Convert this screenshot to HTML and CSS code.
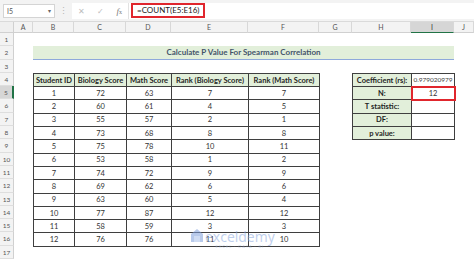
FILE: index.html
```html
<!DOCTYPE html>
<html lang="en">
<head>
    <meta charset="UTF-8">
    <title>Calculate P Value For Spearman Correlation</title>
    <link rel="stylesheet" href="styles.css">
</head>
<body>
    <div class="formula-bar">
        <div class="name-box">
            <span>I5</span>
            <span class="arrow">&#9662;</span>
        </div>
        <div class="dots">&#8942;</div>
        <div class="fx-tools">
            <span>&#10005;</span>
            <span>&#10003;</span>
            <span class="fx"><i>f</i><small>x</small></span>
        </div>
        <div class="formula-input">
            <span class="formula">=COUNT(E5:E16)</span>
        </div>
    </div>

    <div class="sheet">
        <div class="corner"></div>
        <div class="col-head">A</div>
        <div class="col-head">B</div>
        <div class="col-head">C</div>
        <div class="col-head">D</div>
        <div class="col-head">E</div>
        <div class="col-head">F</div>
        <div class="col-head">G</div>
        <div class="col-head">H</div>
        <div class="col-head active">I</div>
        <div class="col-head">J</div>

        <div class="row-head" style="grid-row: 2">1</div>
        <div class="row-head" style="grid-row: 3">2</div>
        <div class="row-head" style="grid-row: 4">3</div>
        <div class="row-head" style="grid-row: 5">4</div>
        <div class="row-head active" style="grid-row: 6">5</div>
        <div class="row-head" style="grid-row: 7">6</div>
        <div class="row-head" style="grid-row: 8">7</div>
        <div class="row-head" style="grid-row: 9">8</div>
        <div class="row-head" style="grid-row: 10">9</div>
        <div class="row-head" style="grid-row: 11">10</div>
        <div class="row-head" style="grid-row: 12">11</div>
        <div class="row-head" style="grid-row: 13">12</div>
        <div class="row-head" style="grid-row: 14">13</div>
        <div class="row-head" style="grid-row: 15">14</div>
        <div class="row-head" style="grid-row: 16">15</div>
        <div class="row-head" style="grid-row: 17">16</div>
        <div class="row-head" style="grid-row: 18">17</div>

        <div class="title">Calculate P Value For Spearman Correlation</div>

        <div class="data-area">
            <table class="data-table">
                <colgroup>
                    <col style="width: 41px">
                    <col style="width: 52px">
                    <col style="width: 45px">
                    <col style="width: 77px">
                    <col style="width: 71px">
                </colgroup>
                <tr>
                    <th>Student ID</th>
                    <th>Biology Score</th>
                    <th>Math Score</th>
                    <th>Rank (Biology Score)</th>
                    <th>Rank (Math Score)</th>
                </tr>
                <tr><td>1</td><td>72</td><td>63</td><td>7</td><td>7</td></tr>
                <tr><td>2</td><td>60</td><td>61</td><td>4</td><td>5</td></tr>
                <tr><td>3</td><td>55</td><td>57</td><td>2</td><td>1</td></tr>
                <tr><td>4</td><td>73</td><td>68</td><td>8</td><td>8</td></tr>
                <tr><td>5</td><td>75</td><td>78</td><td>10</td><td>11</td></tr>
                <tr><td>6</td><td>53</td><td>58</td><td>1</td><td>2</td></tr>
                <tr><td>7</td><td>74</td><td>72</td><td>9</td><td>9</td></tr>
                <tr><td>8</td><td>69</td><td>62</td><td>6</td><td>6</td></tr>
                <tr><td>9</td><td>63</td><td>60</td><td>5</td><td>4</td></tr>
                <tr><td>10</td><td>77</td><td>87</td><td>12</td><td>12</td></tr>
                <tr><td>11</td><td>58</td><td>59</td><td>3</td><td>3</td></tr>
                <tr><td>12</td><td>76</td><td>76</td><td>11</td><td>10</td></tr>
            </table>
        </div>

        <div class="stats-area">
            <table class="stats-table">
                <colgroup>
                    <col style="width: 59px">
                    <col style="width: 43px">
                </colgroup>
                <tr><th>Coefficient (rs):</th><td class="small">0.979020979</td></tr>
                <tr><th>N:</th><td class="selected">12</td></tr>
                <tr><th>T statistic:</th><td></td></tr>
                <tr><th>DF:</th><td></td></tr>
                <tr><th>p value:</th><td></td></tr>
            </table>
        </div>
    </div>

    <!-- watermark -->
    <div class="watermark">
        <svg width="12" height="13" viewBox="0 0 12 13">
            <path d="M6 0 L12 5 L12 13 L0 13 L0 5 Z" fill="#7f9fdc"/>
            <path d="M3 7 L9 7 L9 13 L3 13 Z" fill="#a9c0ea"/>
        </svg>
        <div class="wm-text">
            <span class="wm-name">exceldemy</span>
            <span class="wm-sub">EXCEL · DATA · BI</span>
        </div>
    </div>
</body>
</html>
```

FILE: styles.css
```css
* {
    margin: 0;
    padding: 0;
    box-sizing: border-box;
}

body {
    width: 474px;
    height: 261px;
    overflow: hidden;
    background: #fff;
    font-family: Lato, "Liberation Sans", Arial, sans-serif;
    color: #262626;
    position: relative;
}

/* Formula bar */
.formula-bar {
    display: flex;
    align-items: center;
    height: 22px;
    padding: 3px 0 3px 3px;
    background: #f3f3f3;
    border-bottom: 1px solid #dadada;
}

.name-box {
    display: flex;
    justify-content: space-between;
    align-items: center;
    width: 52px;
    height: 14px;
    padding: 0 3px;
    background: #fff;
    border: 1px solid #d4d4d4;
    font-size: 7px;
    color: #555;
}

.name-box .arrow {
    font-size: 6px;
    color: #666;
}

.dots {
    width: 17px;
    text-align: center;
    font-size: 9px;
    color: #b5b5b5;
}

.fx-tools {
    display: flex;
    align-items: center;
    justify-content: space-around;
    width: 56px;
    height: 16px;
    background: #fff;
    font-size: 8px;
    color: #bdbdbd;
}

.fx-tools .fx {
    font-family: "Liberation Serif", serif;
    color: #7a7a7a;
    font-size: 9px;
}

.fx-tools .fx small {
    font-size: 6px;
}

.formula-input {
    flex: 1;
    height: 16px;
    display: flex;
    align-items: center;
    padding-left: 2px;
    background: #fff;
    border-left: 1px solid #e2e2e2;
}

.formula {
    border: 2px solid #e0262d;
    padding: 0 4px;
    height: 15px;
    line-height: 11px;
    font-size: 8px;
    color: #222;
}

/* Sheet grid */
.sheet {
    display: grid;
    grid-template-columns: 14px 19px 41px 52px 45px 77px 71px 33px 59px 43px 1fr;
    grid-template-rows: 11px repeat(17, 13.3px);
}

.corner {
    grid-row: 1;
    grid-column: 1;
    background: #efefef;
    border-right: 1px solid #d0d0d0;
    border-bottom: 1px solid #d0d0d0;
}

.col-head {
    grid-row: 1;
    background: #f3f3f3;
    border-right: 1px solid #d8d8d8;
    border-bottom: 1px solid #d0d0d0;
    text-align: center;
    font-size: 7px;
    line-height: 10px;
    color: #555;
}

.col-head.active {
    background: #d6d6d6;
    border-bottom: 1px solid #217346;
    color: #333;
}

.row-head {
    grid-column: 1;
    background: #f3f3f3;
    border-right: 1px solid #d0d0d0;
    border-bottom: 1px solid #dedede;
    text-align: center;
    font-size: 6.5px;
    line-height: 13px;
    color: #555;
}

.row-head.active {
    background: #d6d6d6;
    border-right: 2px solid #217346;
}

.title {
    grid-column: 3 / 11;
    grid-row: 3;
    background: #e2efda;
    border-bottom: 1px solid #8ea9db;
    text-align: center;
    font-size: 8px;
    font-weight: 700;
    line-height: 12px;
    color: #44546a;
}

/* Tables */
.data-area {
    grid-column: 3 / 8;
    grid-row: 5 / 18;
}

.stats-area {
    grid-column: 9 / 11;
    grid-row: 5 / 10;
}

table {
    width: 100%;
    height: 100%;
    border-collapse: collapse;
    table-layout: fixed;
}

th, td {
    border: 1px solid #3f3f3f;
    text-align: center;
    font-size: 7.5px;
    white-space: nowrap;
    overflow: hidden;
    height: 13.3px;
    padding: 0;
}

th {
    background: #e2efda;
    font-weight: 700;
    color: #1f1f1f;
}

td {
    color: #333;
    background: #fff;
}

.stats-table td.small {
    font-size: 6.5px;
    color: #444;
}

.stats-table td.selected {
    border: 2px solid #e0262d;
}

/* Watermark */
.watermark {
    position: absolute;
    left: 191px;
    top: 229px;
    display: flex;
    align-items: flex-start;
    gap: 2px;
    opacity: 0.55;
}

.wm-text {
    display: flex;
    flex-direction: column;
    align-items: center;
}

.wm-name {
    font-family: "Open Sans", sans-serif;
    font-size: 14px;
    line-height: 15px;
    color: #8aa8e0;
}

.wm-sub {
    font-size: 4px;
    letter-spacing: 1px;
    color: #9ab0d8;
}
```
